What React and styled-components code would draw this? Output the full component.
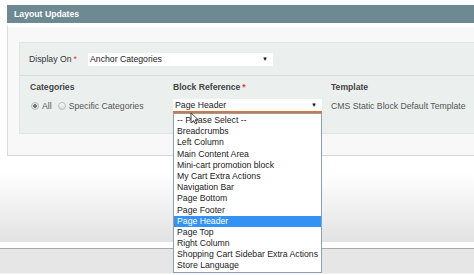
import React from 'react';
import styled, { createGlobalStyle } from 'styled-components';

const GlobalStyle = createGlobalStyle`
  html, body {
    margin: 0;
    padding: 0;
    background: #ffffff;
  }
  body {
    font-family: "Liberation Sans", Arial, sans-serif;
    font-size: 8.7px;
    color: #333;
  }
`;

const Page = styled.div`
  width: 474px;
  height: 275px;
  overflow: hidden;
  position: relative;
  padding-top: 5px;
  box-sizing: border-box;
`;

const Section = styled.section`
  margin-left: 7px;
  margin-right: -12px;
`;

const Header = styled.div`
  height: 18px;
  display: flex;
  align-items: center;
  padding-left: 7px;
  background: #6d8992;
  color: #fff;
  font-weight: bold;
  font-size: 8.7px;
`;

const Panel = styled.div`
  background: #f8f8f8;
  border-top: 4px solid #ffffff;
  border-left: 1px solid #dcdcdc;
  border-bottom: 1px solid #d6d6d6;
  padding: 15px 0 21px 11px;
`;

const InnerBox = styled.div`
  background: #ebf0ef;
  border: 1px solid #e0e6e5;
  border-right: none;
`;

const TopRow = styled.div`
  height: 32px;
  display: flex;
  align-items: center;
  padding-left: 9px;
  border-bottom: 1px solid #d7dedd;
`;

const Label = styled.span`
  color: #333;
  width: ${p => p.$width || 'auto'};
  flex-shrink: 0;
`;

const Req = styled.span`
  color: #e0422c;
  margin-left: 2px;
`;

const Select = styled.div`
  position: relative;
  width: ${p => p.$width};
  height: 13px;
  background: #fff;
  display: flex;
  align-items: center;
  justify-content: space-between;
  padding: 0 5px 0 2px;
  box-sizing: border-box;
  color: #222;
  border-bottom: ${p => (p.$open ? '2px solid #d4773c' : 'none')};
  height: ${p => (p.$open ? '14px' : '13px')};
`;

const Caret = styled.span`
  font-size: 6px;
  color: #111;
`;

const Columns = styled.div`
  display: grid;
  grid-template-columns: 143px 158px 1fr;
  padding: 6px 0 21px 10px;
  height: 57px;
  box-sizing: border-box;
`;

const Col = styled.div`
  display: flex;
  flex-direction: column;
  gap: 7px;
`;

const ColTitle = styled.div`
  font-weight: bold;
  color: #444;
  font-size: 8.6px;
  height: 10px;
  line-height: 10px;
`;

const RadioRow = styled.div`
  display: flex;
  align-items: center;
  height: 13px;
  color: #555;
  padding-left: 1px;
`;

const Radio = styled.span`
  width: 6px;
  height: 6px;
  border-radius: 50%;
  border: 1px solid #bbb;
  background: ${p => (p.$checked ? 'radial-gradient(circle, #777 0 1.6px, #e4e4e4 2.1px)' : 'linear-gradient(#fafafa, #dcdcdc)')};
  margin-right: 3px;
  margin-left: ${p => p.$gap || '0'};
`;

const Plain = styled.div`
  color: #555;
  height: 13px;
  display: flex;
  align-items: center;
`;

const Dropdown = styled.ul`
  position: absolute;
  left: 0;
  top: 14px;
  width: 149px;
  margin: 0;
  padding: 1px 0 0;
  list-style: none;
  background: #fff;
  border: 1px solid #8ea0ab;
  box-sizing: border-box;
  z-index: 5;
`;

const Option = styled.li`
  height: 11.2px;
  line-height: 11.2px;
  padding-left: 3px;
  color: ${p => (p.$active ? '#fff' : '#222')};
  background: ${p => (p.$active ? '#3392f3' : 'transparent')};
  white-space: nowrap;
`;

const Footer = styled.div`
  margin-top: 0;
  height: 86px;
  background: linear-gradient(#ffffff 0%, #ffffff 20%, #e2e2e2 100%);
`;

const FooterBar = styled.div`
  height: 6px;
  background: #fff;
  border-bottom: 1px solid #a8a8a8;
`;

const FooterBase = styled.div`
  height: 24px;
  background: #e6e6e6;
  border-bottom: 1px solid #f2f2f2;
`;

const Cursor = styled.svg`
  position: absolute;
  left: 190px;
  top: 112px;
  z-index: 10;
`;

const options = [
  '-- Please Select --',
  'Breadcrumbs',
  'Left Column',
  'Main Content Area',
  'Mini-cart promotion block',
  'My Cart Extra Actions',
  'Navigation Bar',
  'Page Bottom',
  'Page Footer',
  'Page Header',
  'Page Top',
  'Right Column',
  'Shopping Cart Sidebar Extra Actions',
  'Store Language',
];

export default function App() {
  return (
    <Page>
      <GlobalStyle />
      <Section>
        <Header>Layout Updates</Header>
        <Panel>
          <InnerBox>
            <TopRow>
              <Label $width="59px">
                Display On<Req>*</Req>
              </Label>
              <Select $width="185px">
                <span>Anchor Categories</span>
                <Caret>▼</Caret>
              </Select>
            </TopRow>
            <Columns>
              <Col>
                <ColTitle>Categories</ColTitle>
                <RadioRow>
                  <Radio $checked />
                  All
                  <Radio $gap="6px" />
                  Specific Categories
                </RadioRow>
              </Col>
              <Col>
                <ColTitle>
                  Block Reference<Req>*</Req>
                </ColTitle>
                <Select $width="149px" $open>
                  <span>Page Header</span>
                  <Caret>▼</Caret>
                  <Dropdown>
                    {options.map(o => (
                      <Option key={o} $active={o === 'Page Header'}>
                        {o}
                      </Option>
                    ))}
                  </Dropdown>
                </Select>
              </Col>
              <Col>
                <ColTitle>Template</ColTitle>
                <Plain>CMS Static Block Default Template</Plain>
              </Col>
            </Columns>
          </InnerBox>
        </Panel>
      </Section>
      <Footer />
      <FooterBar />
      <FooterBase />
      <Cursor width="9" height="13" viewBox="0 0 9 13">
        <path d="M1 1 L1 11 L3.5 8.5 L5.5 12 L7 11.3 L5 7.8 L8.3 7.8 Z" fill="#fff" stroke="#222" strokeWidth="0.8" strokeLinejoin="round" />
      </Cursor>
    </Page>
  );
}
